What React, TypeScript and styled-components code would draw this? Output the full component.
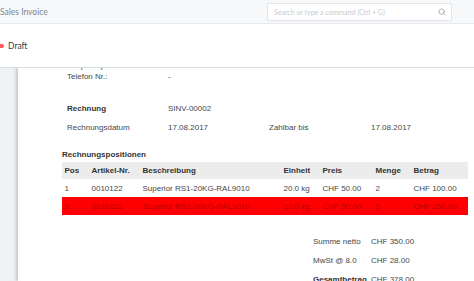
import { Fragment } from 'react';
import styled, { createGlobalStyle } from 'styled-components';
import { Search } from 'lucide-react';

const GlobalStyle = createGlobalStyle`
  html, body {
    margin: 0;
    padding: 0;
    width: 474px;
    height: 281px;
    overflow: hidden;
    background: #ffffff;
  }
`;

const Screen = styled.div`
  width: 474px;
  height: 281px;
  display: flex;
  flex-direction: column;
  overflow: hidden;
`;

const Navbar = styled.header`
  height: 23px;
  flex: none;
  background: #f7f8fa;
  border-bottom: 1px solid #e8ebee;
  display: flex;
  align-items: center;
  justify-content: space-between;
  padding-right: 22px;
`;

const Title = styled.div`
  font-family: Lato, 'Liberation Sans', sans-serif;
  font-size: 8.5px;
  color: #7b8794;
`;

const SearchBox = styled.div`
  width: 185px;
  height: 18px;
  box-sizing: border-box;
  background: #ffffff;
  border: 1px solid #e2e6ea;
  border-radius: 2px;
  display: flex;
  align-items: center;
  justify-content: space-between;
  padding: 0 5px 0 6px;
  color: #6b7580;
`;

const Placeholder = styled.span`
  font-family: Lato, 'Liberation Sans', sans-serif;
  font-size: 7px;
  color: #c6ccd2;
`;

const PageHead = styled.div`
  height: 44px;
  flex: none;
  background: #ffffff;
  border-bottom: 1px solid #d8dde2;
  display: flex;
  align-items: flex-start;
  padding-top: 17px;
  box-sizing: border-box;
`;

const Indicator = styled.div`
  display: flex;
  align-items: center;
  gap: 4px;
  font-family: Lato, 'Liberation Sans', sans-serif;
  font-size: 8.5px;
  color: #36414c;

  &::before {
    content: '';
    width: 4px;
    height: 4px;
    border-radius: 0 2px 2px 0;
    background: #ff5858;
  }
`;

const Body = styled.div`
  flex: 1;
  background: #f0f1f3;
  padding-left: 18px;
  display: flex;
  overflow: hidden;
`;

const Sheet = styled.div`
  flex: 1;
  background: #ffffff;
  box-shadow: -2px 0 3px rgba(0, 0, 0, 0.18);
  overflow: hidden;
  font-family: 'Liberation Sans', Arial, sans-serif;
  font-size: 8px;
  color: #474747;
`;

const Content = styled.div`
  margin-top: -8px;
  padding-left: 49px;
  padding-right: 6px;
  display: flex;
  flex-direction: column;
`;

const InfoRow = styled.div<{ $h?: number; $gap?: number }>`
  display: grid;
  grid-template-columns: 101px 101px 102px 1fr;
  line-height: ${({ $h }) => $h ?? 12}px;
  margin-top: ${({ $gap }) => $gap ?? 0}px;
`;

const Label = styled.span<{ $bold?: boolean }>`
  font-weight: ${({ $bold }) => ($bold ? 700 : 400)};
  color: ${({ $bold }) => ($bold ? '#333333' : 'inherit')};
`;

const SectionTitle = styled.div`
  font-weight: 700;
  color: #333333;
  line-height: 12px;
  margin: 12px 0 1px -5px;
`;

const Table = styled.div`
  margin-left: -5px;
  display: flex;
  flex-direction: column;
`;

const TableRow = styled.div<{ $head?: boolean; $alert?: boolean }>`
  display: grid;
  grid-template-columns: 27px 51px 141px 39px 53px 38px 1fr;
  height: ${({ $head }) => ($head ? '17px' : '18px')};
  align-items: center;
  background: ${({ $head, $alert }) =>
    $alert ? '#ff0000' : $head ? '#ececec' : '#ffffff'};
  color: ${({ $alert, $head }) => ($alert ? '#b80000' : $head ? '#333333' : 'inherit')};
  font-weight: ${({ $head }) => ($head ? 700 : 400)};
`;

const Cell = styled.span`
  padding-left: 2.5px;
  white-space: nowrap;
  overflow: hidden;
`;

const Totals = styled.div`
  margin: 17px 0 0 246px;
  display: grid;
  grid-template-columns: 58px 100px;
  grid-auto-rows: 19px;
  align-items: center;
`;

const heads = ['Pos', 'Artikel-Nr.', 'Beschreibung', 'Einheit', 'Preis', 'Menge', 'Betrag'];

const items = [
  ['1', '0010122', 'Superior RS1-20KG-RAL9010', '20.0 kg', 'CHF 50.00', '2', 'CHF 100.00'],
  ['2', '0010122', 'Superior RS1-20KG-RAL9010', '20.0 kg', 'CHF 50.00', '5', 'CHF 250.00'],
];

const totals = [
  ['Summe netto', 'CHF 350.00', false],
  ['MwSt @ 8.0', 'CHF 28.00', false],
  ['Gesamtbetrag', 'CHF 378.00', true],
] as const;

export default function App() {
  return (
    <Screen>
      <GlobalStyle />
      <Navbar>
        <Title>Sales Invoice</Title>
        <SearchBox>
          <Placeholder>Search or type a command (Ctrl + G)</Placeholder>
          <Search size={8} strokeWidth={1.6} />
        </SearchBox>
      </Navbar>
      <PageHead>
        <Indicator>Draft</Indicator>
      </PageHead>
      <Body>
        <Sheet>
          <Content>
            <InfoRow $h={11}>
              <Label>Ansprechperson:</Label>
            </InfoRow>
            <InfoRow>
              <Label>Telefon Nr.:</Label>
              <span>-</span>
            </InfoRow>
            <InfoRow $h={19} $gap={16}>
              <Label $bold>Rechnung</Label>
              <span>SINV-00002</span>
            </InfoRow>
            <InfoRow $h={19}>
              <Label>Rechnungsdatum</Label>
              <span>17.08.2017</span>
              <Label>Zahlbar bis</Label>
              <span>17.08.2017</span>
            </InfoRow>
            <SectionTitle>Rechnungspositionen</SectionTitle>
            <Table>
              <TableRow $head>
                {heads.map((h) => (
                  <Cell key={h}>{h}</Cell>
                ))}
              </TableRow>
              {items.map((row, i) => (
                <TableRow key={i} $alert={i === 1}>
                  {row.map((c, j) => (
                    <Cell key={j}>{c}</Cell>
                  ))}
                </TableRow>
              ))}
            </Table>
            <Totals>
              {totals.map(([l, v, b]) => (
                <Fragment key={l}>
                  <Label $bold={b}>{l}</Label>
                  <span>{v}</span>
                </Fragment>
              ))}
            </Totals>
          </Content>
        </Sheet>
      </Body>
    </Screen>
  );
}
